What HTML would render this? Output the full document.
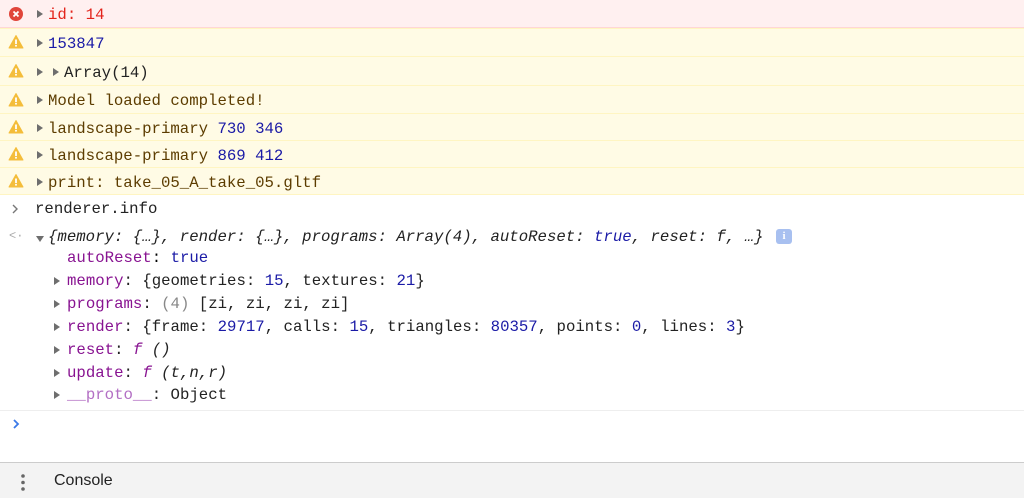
<!DOCTYPE html>
<html><head><style>
body{margin:0;width:1024px;height:497px;background:#fff;font-family:"Liberation Mono",monospace;font-size:15.7px;position:relative;overflow:hidden}
.r{position:absolute;left:0;width:1024px;box-sizing:border-box}
.w{background:#fffbe5;border-top:1px solid #fff5c2;color:#5c3c00}
.e{background:#fff0f0;border-bottom:1px solid #ffd6d6;color:#e3241b}
.t{position:absolute;white-space:pre}
.tri{position:absolute;width:0;height:0;border-left:6px solid #6e6e6e;border-top:4px solid transparent;border-bottom:4px solid transparent}
.trd{position:absolute;width:0;height:0;border-top:6px solid #6e6e6e;border-left:4px solid transparent;border-right:4px solid transparent}
.b{color:#1a1aa6}.p{color:#881391}.g{color:#888}.k{color:#222}.lp{color:#b36fc4}
i{font-style:italic}
</style></head><body>
<div class="r e" style="top:0;height:28px">
<svg style="position:absolute;left:9px;top:7px" width="14" height="14"><circle cx="7" cy="7" r="7" fill="#e0453a"/><path d="M4.5 4.5l5 5M9.5 4.5l-5 5" stroke="#fff" stroke-width="1.8"/></svg>
<div class="tri" style="left:37px;top:10px"></div><div class="t" style="left:48px;top:6px">id: 14</div></div>
<div class="r w" style="top:28px;height:28px"><div class="tri" style="left:37px;top:10px"></div><div class="t b" style="left:48px;top:6px">153847</div></div>
<div class="r w" style="top:56px;height:29px"><div class="tri" style="left:37px;top:11px"></div><div class="tri" style="left:53px;top:11px"></div><div class="t k" style="left:64px;top:7px">Array(14)</div></div>
<div class="r w" style="top:85px;height:28px"><div class="tri" style="left:37px;top:10px"></div><div class="t" style="left:48px;top:6px">Model loaded completed!</div></div>
<div class="r w" style="top:113px;height:27px"><div class="tri" style="left:37px;top:10px"></div><div class="t" style="left:48px;top:6px">landscape-primary <span class="b">730 346</span></div></div>
<div class="r w" style="top:140px;height:27px"><div class="tri" style="left:37px;top:10px"></div><div class="t" style="left:48px;top:6px">landscape-primary <span class="b">869 412</span></div></div>
<div class="r w" style="top:167px;height:28px;border-bottom:1px solid #fff5c2"><div class="tri" style="left:37px;top:10px"></div><div class="t" style="left:48px;top:6px">print: take_05_A_take_05.gltf</div></div>
<svg style="position:absolute;left:0;top:0" width="30" height="220">
<defs><g id="wi"><path d="M16 35.5l-7 12.5h14z" fill="#f4bd3b" stroke="#f4bd3b" stroke-linejoin="round" stroke-width="1"/><path d="M16 39.5v4.5" stroke="#fff" stroke-width="1.8"/><circle cx="16" cy="45.8" r="1" fill="#fff"/></g></defs>
<use href="#wi"/>
<use href="#wi" y="29"/>
<use href="#wi" y="58"/>
<use href="#wi" y="85"/>
<use href="#wi" y="112"/>
<use href="#wi" y="139"/>
<path d="M13 205l4 4-4 4" stroke="#777" stroke-width="1.4" fill="none"/>
</svg>
<div class="t k" style="left:35px;top:200px">renderer.info</div>
<div class="t" style="left:9px;top:229px;color:#aaa;font-size:12px">&lt;·</div>
<div class="trd" style="left:36px;top:236px"></div>
<div class="t k" style="left:48px;top:228px"><i>{memory: {…}, render: {…}, programs: Array(4), autoReset: <span class="b">true</span>, reset: f, …}</i></div>
<div style="position:absolute;left:776px;top:229px;width:16px;height:15px;background:#a8c0f0;border-radius:3px;color:#fff;font:bold 11px 'Liberation Serif',serif;text-align:center;line-height:15px">i</div>
<div class="t" style="left:67px;top:249px"><span class="p">autoReset</span>: <span class="b">true</span></div>
<div class="tri" style="left:54px;top:277px"></div><div class="t k" style="left:67px;top:272px"><span class="p">memory</span>: {geometries: <span class="b">15</span>, textures: <span class="b">21</span>}</div>
<div class="tri" style="left:54px;top:300px"></div><div class="t k" style="left:67px;top:295px"><span class="p">programs</span>: <span class="g">(4)</span> [zi, zi, zi, zi]</div>
<div class="tri" style="left:54px;top:323px"></div><div class="t k" style="left:67px;top:318px"><span class="p">render</span>: {frame: <span class="b">29717</span>, calls: <span class="b">15</span>, triangles: <span class="b">80357</span>, points: <span class="b">0</span>, lines: <span class="b">3</span>}</div>
<div class="tri" style="left:54px;top:346px"></div><div class="t k" style="left:67px;top:341px"><span class="p">reset</span>: <i><span class="p">f</span> ()</i></div>
<div class="tri" style="left:54px;top:369px"></div><div class="t k" style="left:67px;top:364px"><span class="p">update</span>: <i><span class="p">f</span> (t,n,r)</i></div>
<div class="tri" style="left:54px;top:391px"></div><div class="t k" style="left:67px;top:386px"><span class="lp">__proto__</span>: Object</div>
<div style="position:absolute;left:0;top:410px;width:1024px;border-top:1px solid #eee"></div>
<svg style="position:absolute;left:10px;top:418px" width="12" height="12"><path d="M4 2l4 4-4 4" stroke="#3b7ae8" stroke-width="1.8" fill="none"/></svg>
<div style="position:absolute;left:0;top:462px;width:1024px;height:35px;background:#f3f3f3;border-top:1px solid #ccc"></div>
<svg style="position:absolute;left:20px;top:473px" width="6" height="20"><circle cx="3" cy="3" r="1.8" fill="#666"/><circle cx="3" cy="9.5" r="1.8" fill="#666"/><circle cx="3" cy="16" r="1.8" fill="#666"/></svg>
<div class="t" style="left:54px;top:472px;font-family:'Liberation Sans',sans-serif;font-size:16px;color:#222">Console</div>
</body></html>
